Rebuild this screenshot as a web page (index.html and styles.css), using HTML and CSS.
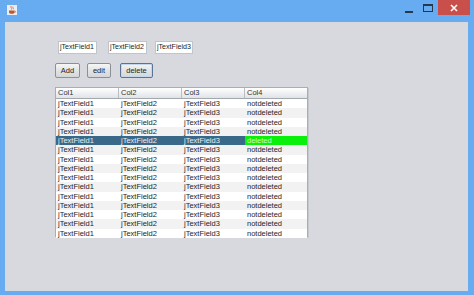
FILE: index.html
```html
<!DOCTYPE html>
<html>
<head>
<meta charset="utf-8">
<link rel="stylesheet" href="styles.css">
</head>
<body>
<div class="window">
  <div class="titlebar">
    <svg class="app-icon" width="10" height="10" viewBox="0 0 10 10">
      <rect x="0" y="0" width="10" height="10" fill="#e9eef4"/>
      <path d="M4 1 C3 2.5 5.5 3 4.5 4.5" stroke="#d9662a" stroke-width="0.9" fill="none"/>
      <path d="M6 1.5 C5.2 2.7 7 3 6.2 4.3" stroke="#d9662a" stroke-width="0.8" fill="none"/>
      <path d="M2 5.5 H7.5 V7 C7.5 8.3 6.5 8.8 4.8 8.8 C3 8.8 2 8.3 2 7 Z" fill="#c0572a"/>
      <path d="M7.5 6 C9 6 9 7.5 7.4 7.6" stroke="#c0572a" stroke-width="0.7" fill="none"/>
    </svg>
    <div class="spacer"></div>
    <div class="ctl ctl-min"><span class="min-glyph"></span></div>
    <div class="ctl ctl-max"><span class="max-glyph"></span></div>
    <div class="ctl ctl-close">
      <svg width="8" height="8" viewBox="0 0 8 8"><path d="M1 1 L7 7 M7 1 L1 7" stroke="#ffffff" stroke-width="1.6"/></svg>
    </div>
  </div>
  <div class="client">
    <div class="fields">
      <div class="tf tf1">jTextField1</div>
      <div class="tf tf2">jTextField2</div>
      <div class="tf tf3">jTextField3</div>
    </div>
    <div class="buttons">
      <div class="btn b-add">Add</div>
      <div class="btn b-edit">edit</div>
      <div class="btn b-del">delete</div>
    </div>
    <div class="table">
      <div class="row head">
        <div class="cell c1">Col1</div>
        <div class="cell c2">Col2</div>
        <div class="cell c3">Col3</div>
        <div class="cell c4">Col4</div>
      </div>
      <div class="row"><div class="cell c1">jTextField1</div><div class="cell c2">jTextField2</div><div class="cell c3">jTextField3</div><div class="cell c4">notdeleted</div></div>
      <div class="row alt"><div class="cell c1">jTextField1</div><div class="cell c2">jTextField2</div><div class="cell c3">jTextField3</div><div class="cell c4">notdeleted</div></div>
      <div class="row"><div class="cell c1">jTextField1</div><div class="cell c2">jTextField2</div><div class="cell c3">jTextField3</div><div class="cell c4">notdeleted</div></div>
      <div class="row alt"><div class="cell c1">jTextField1</div><div class="cell c2">jTextField2</div><div class="cell c3">jTextField3</div><div class="cell c4">notdeleted</div></div>
      <div class="row sel"><div class="cell c1">jTextField1</div><div class="cell c2">jTextField2</div><div class="cell c3">jTextField3</div><div class="cell c4 deleted">deleted</div></div>
      <div class="row alt"><div class="cell c1">jTextField1</div><div class="cell c2">jTextField2</div><div class="cell c3">jTextField3</div><div class="cell c4">notdeleted</div></div>
      <div class="row"><div class="cell c1">jTextField1</div><div class="cell c2">jTextField2</div><div class="cell c3">jTextField3</div><div class="cell c4">notdeleted</div></div>
      <div class="row alt"><div class="cell c1">jTextField1</div><div class="cell c2">jTextField2</div><div class="cell c3">jTextField3</div><div class="cell c4">notdeleted</div></div>
      <div class="row"><div class="cell c1">jTextField1</div><div class="cell c2">jTextField2</div><div class="cell c3">jTextField3</div><div class="cell c4">notdeleted</div></div>
      <div class="row alt"><div class="cell c1">jTextField1</div><div class="cell c2">jTextField2</div><div class="cell c3">jTextField3</div><div class="cell c4">notdeleted</div></div>
      <div class="row"><div class="cell c1">jTextField1</div><div class="cell c2">jTextField2</div><div class="cell c3">jTextField3</div><div class="cell c4">notdeleted</div></div>
      <div class="row alt"><div class="cell c1">jTextField1</div><div class="cell c2">jTextField2</div><div class="cell c3">jTextField3</div><div class="cell c4">notdeleted</div></div>
      <div class="row"><div class="cell c1">jTextField1</div><div class="cell c2">jTextField2</div><div class="cell c3">jTextField3</div><div class="cell c4">notdeleted</div></div>
      <div class="row alt"><div class="cell c1">jTextField1</div><div class="cell c2">jTextField2</div><div class="cell c3">jTextField3</div><div class="cell c4">notdeleted</div></div>
      <div class="row"><div class="cell c1">jTextField1</div><div class="cell c2">jTextField2</div><div class="cell c3">jTextField3</div><div class="cell c4">notdeleted</div></div>
    </div>
  </div>
</div>
</body>
</html>
```
FILE: styles.css
```css
html, body {
  margin: 0;
  padding: 0;
}
body {
  width: 474px;
  height: 295px;
  overflow: hidden;
  font-family: "Liberation Sans", Arial, sans-serif;
  font-size: 7.5px;
  color: #1e1e1e;
}
.window {
  width: 474px;
  height: 295px;
  background: #67acf0;
  display: flex;
  flex-direction: column;
  box-sizing: border-box;
}
.titlebar {
  height: 22px;
  display: flex;
  align-items: flex-start;
  flex: none;
}
.app-icon {
  margin: 5px 0 0 7px;
}
.spacer { flex: 1; }
.ctl {
  height: 15px;
  display: flex;
  align-items: center;
  justify-content: center;
}
.ctl-min { width: 18px; }
.ctl-max { width: 18px; margin-left: 1px; }
.ctl-close {
  width: 32px;
  background: #c9504a;
  margin: 0 4px 0 1px;
}
.min-glyph {
  width: 8px;
  height: 2px;
  background: #26384f;
  margin-top: 8px;
}
.max-glyph {
  width: 8px;
  height: 5px;
  border: 1px solid #26384f;
  border-top-width: 2px;
  margin-top: 1px;
}
.client {
  flex: 1;
  margin: 0 6px 4px 5px;
  background: #d7d9df;
  padding: 19px 0 0 50px;
  box-sizing: border-box;
}
.fields {
  display: flex;
  height: 13px;
  margin-left: 3px;
}
.tf {
  background: #ffffff;
  border: 1px solid #bfc5cd;
  box-sizing: border-box;
  height: 13px;
  line-height: 11px;
  padding-left: 1px;
  font-size: 7.1px;
  white-space: nowrap;
  overflow: hidden;
}
.tf1 { width: 39px; }
.tf2 { width: 39px; margin-left: 11px; }
.tf3 { width: 38px; margin-left: 8px; }
.buttons {
  display: flex;
  margin-top: 9px;
  height: 15px;
}
.btn {
  box-sizing: border-box;
  height: 15px;
  line-height: 13px;
  text-align: center;
  border: 1px solid #8b9097;
  border-radius: 2px;
  background: linear-gradient(#f6f6f6, #e2e3e5 50%, #d4d6d9);
  color: #1e1e1e;
}
.b-add { width: 25px; }
.b-edit { width: 24px; margin-left: 7px; }
.b-del {
  width: 33px;
  margin-left: 9px;
  border-color: #5b7495;
  box-shadow: inset 0 0 0 1px #c3d6ec;
}
.table {
  margin-top: 9px;
  width: 253px;
  height: 150px;
  background: #ffffff;
  border: 1px solid #a9aeb5;
  box-sizing: border-box;
  box-shadow: 1px 1px 0 #c4c7cd;
}
.row {
  display: flex;
  height: 9.25px;
  line-height: 9.25px;
  background: #ffffff;
}
.row.alt { background: #f2f2f2; }
.row.head {
  height: 10px;
  line-height: 10px;
  background: linear-gradient(#ffffff, #eceef1 60%, #e0e3e7);
  border-bottom: 1px solid #a3a8ae;
  color: #333;
}
.cell {
  box-sizing: border-box;
  padding-left: 2px;
  white-space: nowrap;
  overflow: hidden;
}
.head .cell { border-right: 1px solid #b9bec5; }
.head .cell.c4 { border-right: none; }
.c1 { width: 63px; }
.c2 { width: 63px; }
.c3 { width: 63px; }
.c4 { flex: 1; }
.row.sel {
  background: #3a6888;
  color: #e6eef5;
}
.cell.deleted {
  background: #0af00a;
  color: #c8ffc8;
}
```
